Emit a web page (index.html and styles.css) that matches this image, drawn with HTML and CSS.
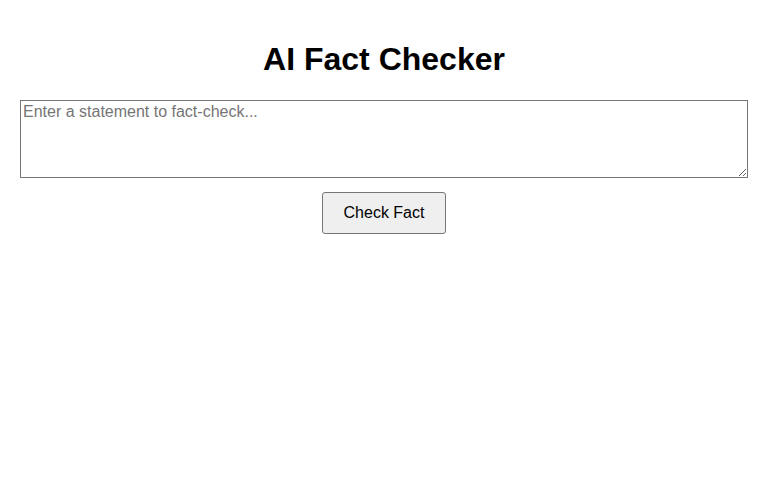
FILE: index.html
```html
<!DOCTYPE html>
<html lang="en">
<head>
<meta charset="utf-8">
<title>AI Fact Checker</title>
<link rel="stylesheet" href="styles.css">
</head>
<body>
<div class="container">
  <h1 class="title">AI Fact Checker</h1>
  <textarea class="statement" placeholder="Enter a statement to fact-check..."></textarea>
  <div class="actions">
    <button class="check-btn">Check Fact</button>
  </div>
</div>
</body>
</html>
```

FILE: styles.css
```css
html, body {
  margin: 0;
  background: #ffffff;
}
body {
  padding: 20px;
  font-family: "Liberation Sans", Arial, sans-serif;
}
.container {
  display: flex;
  flex-direction: column;
  align-items: center;
}
.title {
  font-size: 32px;
  font-weight: bold;
  margin: 21px 0 22px;
  color: #000;
}
.statement {
  box-sizing: border-box;
  width: 100%;
  height: 78px;
  font-family: "Liberation Sans", Arial, sans-serif;
  font-size: 16px;
  padding: 2px;
  border: 1px solid #767676;
  margin: 0;
}
.statement::placeholder {
  color: #757575;
}
.actions {
  margin-top: 14px;
}
.check-btn {
  font-family: "Liberation Sans", Arial, sans-serif;
  font-size: 16px;
  padding: 11px 21px;
  border: 1px solid #767676;
  border-radius: 3px;
  background: #efefef;
  color: #000;
  cursor: pointer;
}
```
